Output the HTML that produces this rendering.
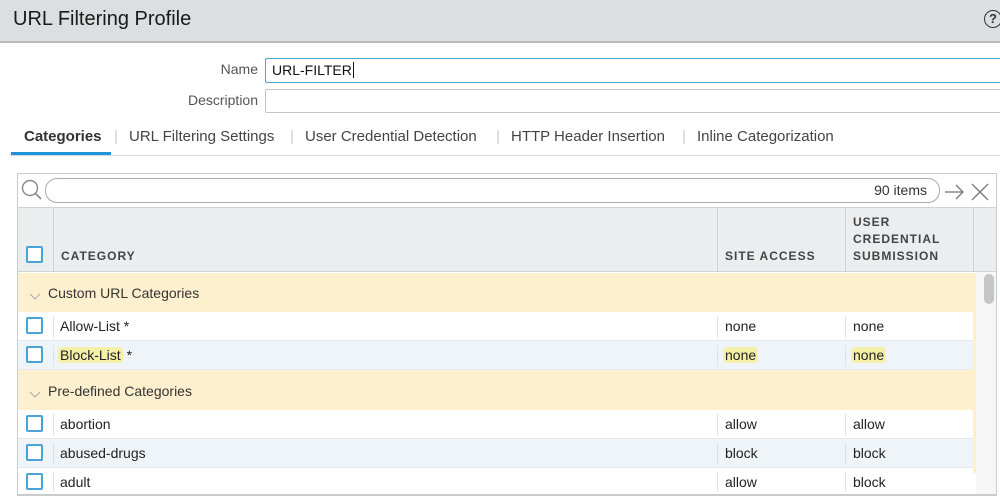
<!DOCTYPE html>
<html><head><style>
*{box-sizing:border-box;margin:0;padding:0}
body{width:1000px;height:496px;overflow:hidden;background:#fff;font-family:"Liberation Sans",sans-serif;color:#222;position:relative}
.a{position:absolute}
.cb{position:absolute;left:8px;width:17px;height:17px;border:2px solid #4aa3d8;border-radius:2px;background:#fff}
.row{position:absolute;left:18px;width:955px;height:29px;font-size:14px;border-bottom:1px solid #e6e9eb}
.row span{position:absolute;top:6px}
.vl{position:absolute;top:4px;bottom:2px;width:1px;background:#dfe2e4}
.grp{position:absolute;left:18px;width:958px;background:#fdf0cf;font-size:14px;color:#333}
.hl{background:#f5f0a8;border-radius:4px;padding:0 2px;margin-left:-2px}
</style></head><body>
<div class="a" style="left:0;top:0;width:1000px;height:43px;background:#dddedf;border-bottom:2px solid #b9bbbd"></div>
<div class="a" style="left:13px;top:8px;font-size:20px;color:#1a1a1a">URL Filtering Profile</div>
<div class="a" style="left:984px;top:10px;width:18px;height:18px;border:1.5px solid #333;border-radius:50%;font-size:13px;font-weight:bold;line-height:15px;text-align:center;color:#333">?</div>
<div class="a" style="left:150px;top:61px;width:108px;text-align:right;font-size:14px;color:#555">Name</div>
<div class="a" style="left:265px;top:58px;width:740px;height:25px;border:1.5px solid #4aa3d8;border-radius:2px;font-size:14px;padding:3px 6px;color:#111">URL-FILTER<span style="border-left:1px solid #111;margin-left:1px"></span></div>
<div class="a" style="left:150px;top:92px;width:108px;text-align:right;font-size:14px;color:#555">Description</div>
<div class="a" style="left:265px;top:89px;width:740px;height:24px;border:1px solid #c4c6c8;border-radius:2px"></div>
<div class="a" style="left:0;top:128px;font-size:15px;color:#444;white-space:nowrap">
<span class="a" style="left:24px;font-weight:bold;color:#333">Categories</span>
<span class="a" style="left:114px;color:#ccc">|</span>
<span class="a" style="left:129px">URL Filtering Settings</span>
<span class="a" style="left:290px;color:#ccc">|</span>
<span class="a" style="left:305px">User Credential Detection</span>
<span class="a" style="left:496px;color:#ccc">|</span>
<span class="a" style="left:511px">HTTP Header Insertion</span>
<span class="a" style="left:682px;color:#ccc">|</span>
<span class="a" style="left:697px">Inline Categorization</span></div>
<div class="a" style="left:10px;top:155px;width:990px;height:1px;background:#d6d8da"></div>
<div class="a" style="left:11px;top:152px;width:100px;height:3px;background:#1d94d8"></div>
<div class="a" style="left:17px;top:173px;width:980px;height:322px;border:1px solid #c9cbcd"></div>
<svg class="a" style="left:20px;top:178px" width="24" height="24"><circle cx="10" cy="10" r="7.5" fill="none" stroke="#888" stroke-width="1.4"/><line x1="15.5" y1="15.5" x2="21" y2="21" stroke="#888" stroke-width="1.6"/></svg>
<div class="a" style="left:45px;top:178px;width:895px;height:25px;border:1px solid #aaa;border-radius:12px;font-size:14px;text-align:right;padding:3px 12px;color:#333">90 items</div>
<svg class="a" style="left:943px;top:181px" width="52" height="22"><path d="M2 11H20M13 4L20 11L13 18" fill="none" stroke="#777" stroke-width="1.3"/><path d="M29 3L45 19M45 3L29 19" fill="none" stroke="#777" stroke-width="1.3"/></svg>
<div class="a" style="left:18px;top:207px;width:978px;height:65px;background:#ecedee;border-top:1px solid #d0d2d4;border-bottom:1px solid #d0d2d4"></div>
<div class="a" style="left:53px;top:207px;width:1px;height:65px;background:#cfd1d3"></div>
<div class="a" style="left:717px;top:207px;width:1px;height:65px;background:#cfd1d3"></div>
<div class="a" style="left:845px;top:207px;width:1px;height:65px;background:#cfd1d3"></div>
<div class="a" style="left:973px;top:207px;width:1px;height:65px;background:#cfd1d3"></div>
<div class="cb" style="left:26px;top:246px"></div>
<div class="a" style="font-size:12px;font-weight:bold;letter-spacing:1px;color:#444;left:61px;top:249px">CATEGORY</div>
<div class="a" style="font-size:12px;font-weight:bold;letter-spacing:1px;color:#444;left:725px;top:249px">SITE ACCESS</div>
<div class="a" style="font-size:12px;font-weight:bold;letter-spacing:1px;color:#444;left:853px;top:214px;line-height:17px">USER<br>CREDENTIAL<br>SUBMISSION</div>
<div class="a" style="left:976px;top:272px;width:20px;height:222px;background:#f6f6f6"></div>
<div class="a" style="left:984px;top:274px;width:10px;height:30px;background:#c5c6c8;border-radius:5px"></div>
<div class="grp" style="top:273px;height:200px"></div>
<svg class="a" style="left:29px;top:293px" width="12" height="8"><path d="M1 1L6 6L11 1" fill="none" stroke="#aaa" stroke-width="1"/></svg>
<div class="a" style="left:48px;top:285px;font-size:14px;color:#333">Custom URL Categories</div>
<svg class="a" style="left:29px;top:391px" width="12" height="8"><path d="M1 1L6 6L11 1" fill="none" stroke="#aaa" stroke-width="1"/></svg>
<div class="a" style="left:48px;top:383px;font-size:14px;color:#333">Pre-defined Categories</div>

<div class="row" style="top:312px;background:#fff"><div class="cb" style="top:5px"></div><div class="vl" style="left:35px"></div><span style="left:42px">Allow-List *</span><div class="vl" style="left:699px"></div><span style="left:707px">none</span><div class="vl" style="left:827px"></div><span style="left:835px">none</span></div>
<div class="row" style="top:341px;background:#eef4f7"><div class="cb" style="top:5px"></div><div class="vl" style="left:35px"></div><span style="left:42px"><span class="hl" style="position:static">Block-List</span> *</span><div class="vl" style="left:699px"></div><span style="left:707px" class="hl">none</span><div class="vl" style="left:827px"></div><span style="left:835px" class="hl">none</span></div>
<div class="row" style="top:410px;background:#fff"><div class="cb" style="top:5px"></div><div class="vl" style="left:35px"></div><span style="left:42px">abortion</span><div class="vl" style="left:699px"></div><span style="left:707px">allow</span><div class="vl" style="left:827px"></div><span style="left:835px">allow</span></div>
<div class="row" style="top:439px;background:#eef4f7"><div class="cb" style="top:5px"></div><div class="vl" style="left:35px"></div><span style="left:42px">abused-drugs</span><div class="vl" style="left:699px"></div><span style="left:707px">block</span><div class="vl" style="left:827px"></div><span style="left:835px">block</span></div>
<div class="row" style="top:468px;height:26px;background:#fff;border:none"><div class="cb" style="top:5px"></div><div class="vl" style="left:35px"></div><span style="left:42px">adult</span><div class="vl" style="left:699px"></div><span style="left:707px">allow</span><div class="vl" style="left:827px"></div><span style="left:835px">block</span></div>
<div class="a" style="left:17px;top:494px;width:980px;height:2px;background:#c9cbcd"></div>
</body></html>
